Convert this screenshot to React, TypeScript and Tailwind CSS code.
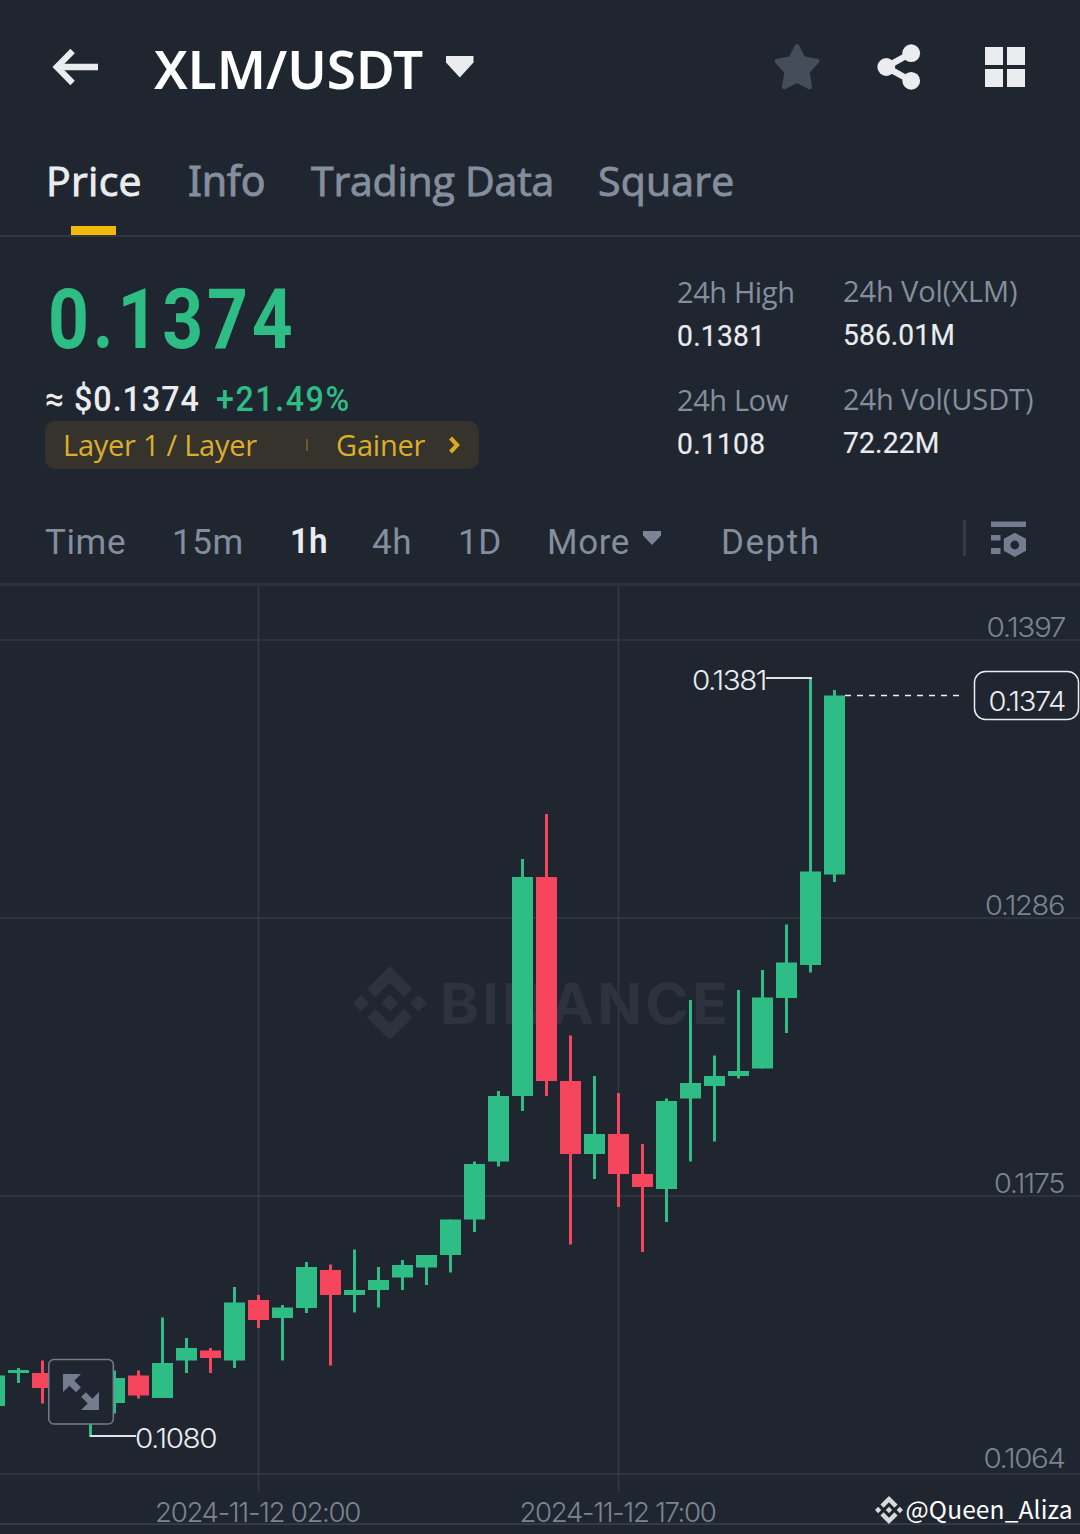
import React from 'react';

type Candle = [x: number, top: number, bottom: number, high: number, low: number, up: boolean];

const candles: Candle[] = [
  [834.5, 695.5, 874.5, 690, 882, true],
  [810.5, 871.5, 965, 678, 972.5, true],
  [786.5, 962.5, 998, 924.5, 1033, true],
  [762.5, 997.5, 1068.5, 970, 1068.5, true],
  [738.5, 1071, 1076, 990, 1078.5, true],
  [714.5, 1076, 1086, 1055.5, 1141.5, true],
  [690.5, 1083, 1098.5, 1000, 1161.5, true],
  [666.5, 1101, 1189, 1098.5, 1222, true],
  [642.5, 1174, 1187, 1144, 1252, false],
  [618.5, 1134, 1174, 1093, 1207, false],
  [594.5, 1134, 1154, 1076, 1179, true],
  [570.5, 1081, 1154, 1035.5, 1244.5, false],
  [546.5, 877, 1081, 814, 1096, false],
  [522.5, 877, 1096, 859, 1111, true],
  [498.5, 1096, 1161.5, 1091, 1166.5, true],
  [474.5, 1164, 1219.5, 1161.5, 1232, true],
  [450.5, 1219.5, 1255, 1219.5, 1272.5, true],
  [426.5, 1255, 1267.5, 1255, 1285, true],
  [402.5, 1265, 1277.5, 1260, 1290, true],
  [378.5, 1280, 1290, 1267, 1307.5, true],
  [354.5, 1290, 1295, 1249.5, 1312.5, true],
  [330.5, 1270, 1295, 1264.5, 1365.5, false],
  [306.5, 1267, 1308, 1262, 1313, true],
  [282.5, 1307.5, 1318, 1305, 1360.5, true],
  [258.5, 1300, 1320, 1295, 1328, false],
  [234.5, 1302.5, 1360.5, 1287, 1368, true],
  [210.5, 1350.5, 1358, 1348, 1373, false],
  [186.5, 1348, 1360.5, 1338, 1373, true],
  [162.5, 1363, 1398, 1317.5, 1398, true],
  [138.5, 1375.5, 1395.5, 1370.5, 1398.5, false],
  [114.5, 1378, 1403, 1370.5, 1413.5, true],
  [90.5, 1390, 1410, 1380, 1437, true],
  [42.5, 1373, 1388, 1360.5, 1403.5, false],
  [18.5, 1370, 1373, 1368, 1383, true],
  [-5.5, 1375.5, 1406, 1370, 1410, true],
];

const LOGO =
  'M16.624 13.9202l2.7175 2.7154-7.353 7.353-7.353-7.352 2.7175-2.7164 4.6355 4.6595 4.6356-4.6595zm4.6366-4.6366L24 12l-2.7154 2.7164L18.5682 12l2.6924-2.7164zm-9.272.001l2.7163 2.6914-2.7164 2.7174v-.001L9.2721 12l2.7164-2.7154zm-9.2722-.001L5.4088 12l-2.6914 2.6924L0 12l2.7164-2.7164zM11.9885.0115l7.353 7.329-2.7174 2.7154-4.6356-4.6356-4.6355 4.6595-2.7174-2.7154 7.353-7.353z';

function Header() {
  return (
    <header className="flex h-[134px] items-center">
      <svg className="ml-[52px] h-[38px] w-[47px]" viewBox="52 48.2 47 38" fill="none" stroke="#eaecef">
        <path d="M98 67.2H58" strokeWidth="6.6" />
        <path d="M72.6 51.2L56.8 67.2L72.6 83.2" strokeWidth="6.2" />
      </svg>
      <h1 className="mt-[3px] ml-[55px] w-[292px] font-['Noto_Sans',sans-serif] text-[53px] leading-[70px] font-semibold text-white">
        XLM/USDT
      </h1>
      <svg className="h-[22px] w-[28px]" viewBox="0 0 28 22" fill="#eaecef">
        <path d="M0 0H27.5V6.5L13.8 21.5L0 6.5Z" />
      </svg>
      <svg className="ml-[299px] h-[48px] w-[48px]" viewBox="773 43 48 48">
        <path
          d="M797 46.5L803 58.8L816.8 61.2L807 71.8L809.6 86.8L797 80.2L784.4 86.8L787 71.8L777.2 61.2L791 58.8Z"
          fill="#454d5b"
          stroke="#454d5b"
          strokeWidth="5"
          strokeLinejoin="round"
        />
      </svg>
      <svg className="ml-[55px] h-[48px] w-[46px]" viewBox="876 43 46 48" fill="#eaecef">
        <path d="M911 53.2L886 67L911 80.8" fill="none" stroke="#eaecef" strokeWidth="6.4" />
        <circle cx="911.2" cy="53.2" r="8.9" />
        <circle cx="886.3" cy="67" r="8.9" />
        <circle cx="911.2" cy="80.8" r="8.9" />
      </svg>
      <div className="ml-[63px] grid grid-cols-2 gap-[4px]">
        <i className="size-[18px] bg-[#eaecef]" />
        <i className="size-[18px] bg-[#eaecef]" />
        <i className="size-[18px] bg-[#eaecef]" />
        <i className="size-[18px] bg-[#eaecef]" />
      </div>
    </header>
  );
}

function Tabs() {
  return (
    <nav className="h-[103px] border-b-2 border-[#303741]">
      <div className="flex h-[92px] items-center pl-[46px] font-['Open_Sans',sans-serif] text-[41px] leading-[60px] text-[#848e9c] [-webkit-text-stroke:0.9px]">
        <span className="w-[142px] tracking-[0.3px] text-[#eaecef]">Price</span>
        <span className="w-[123px] font-['Noto_Sans',sans-serif] tracking-[-0.2px]">Info</span>
        <span className="w-[287px] tracking-[-0.2px] whitespace-nowrap">Trading Data</span>
        <span className="tracking-[0.2px]">Square</span>
      </div>
      <div className="ml-[71px] h-[9px] w-[45px] bg-[#f0b90b]" />
    </nav>
  );
}

function Stat({ label, value, labelClass, valueClass }: { label: string; value: string; labelClass: string; valueClass: string }) {
  return (
    <div className="whitespace-nowrap">
      <div className={`h-[43px] font-['Open_Sans',sans-serif] text-[29px] leading-[43px] text-[#848e9c] ${labelClass}`}>{label}</div>
      <div className={`h-[43px] origin-left scale-x-[0.94] font-['Roboto',sans-serif] text-[30px] leading-[45px] text-[#eaecef] [-webkit-text-stroke:0.2px] ${valueClass}`}>
        {value}
      </div>
    </div>
  );
}

function Summary() {
  return (
    <section className="flex h-[263px]">
      <div className="ml-[45px] w-[632px] pt-[39px]">
        <div className="ml-[3px] h-[88px] origin-left scale-x-[0.86] font-['Roboto',sans-serif] text-[83px] leading-[88px] font-bold tracking-[4.5px] text-[#2ebd85]">
          0.1374
        </div>
        <div className="mt-[14px] flex h-[43px] font-['Roboto',sans-serif] text-[35px] leading-[44px] font-medium whitespace-nowrap">
          <span className="w-[29px] origin-left scale-x-[0.95] text-[#eaecef]">≈</span>
          <span className="w-[142px] origin-left scale-x-[0.92] tracking-[1.1px] text-[#eaecef]">$0.1374</span>
          <span className="origin-left scale-x-[0.92] tracking-[1.7px] text-[#2ebd85]">+21.49%</span>
        </div>
        <div className="flex h-[48px] w-[434px] items-center rounded-[10px] bg-[#35332b] font-['Open_Sans',sans-serif] text-[29px] leading-[46px] whitespace-nowrap text-[#dcae2c]">
          <span className="ml-[18px] w-[243px] tracking-[-0.25px]">Layer 1 / Layer</span>
          <span className="h-[12px] w-[2px] bg-[#6b5a27]" />
          <span className="ml-[28px] w-[112px] tracking-[-0.2px]">Gainer</span>
          <svg className="h-[18px] w-[13px]" viewBox="0 0 13 18" fill="none" stroke="#dcaa1e" strokeWidth="4">
            <path d="M2.5 2L9.2 9L2.5 16" />
          </svg>
        </div>
      </div>
      <div className="flex w-[166px] flex-col gap-[22px] pt-[33px]">
        <Stat label="24h High" value="0.1381" labelClass="tracking-[-0.4px]" valueClass="tracking-[0.3px]" />
        <Stat label="24h Low" value="0.1108" labelClass="tracking-[-0.4px]" valueClass="tracking-[0.3px]" />
      </div>
      <div className="flex flex-col gap-[22px] pt-[32px]">
        <Stat label="24h Vol(XLM)" value="586.01M" labelClass="tracking-[-0.1px]" valueClass="tracking-[0.1px]" />
        <Stat label="24h Vol(USDT)" value="72.22M" labelClass="tracking-[-0.1px]" valueClass="tracking-[0.2px]" />
      </div>
    </section>
  );
}

function Intervals() {
  return (
    <div className="flex h-[86px] items-center border-b-[3px] border-[#2b323d] pt-[2px] pl-[45px] font-['Roboto',sans-serif] text-[35px] leading-[44px] tracking-[0.6px] text-[#848e9c]">
      <span className="w-[127px]">Time</span>
      <span className="w-[118px]">15m</span>
      <span className="mb-[2px] w-[82px] origin-left scale-x-[0.95] font-semibold tracking-[0px] text-[#eaecef]">1h</span>
      <span className="w-[86px]">4h</span>
      <span className="w-[89px]">1D</span>
      <span className="w-[96px]">More</span>
      <svg className="mb-[10px] h-[14px] w-[18px]" viewBox="0 0 18 14" fill="#7a8494">
        <path d="M0 0H18V4.6L9 14L0 4.6Z" />
      </svg>
      <span className="ml-[60px] w-[242px] tracking-[1.5px]">Depth</span>
      <span className="mb-[9px] h-[36px] w-[3px] bg-[#343b46]" />
      <svg className="mb-[8px] ml-[25px] h-[36px] w-[36px]" viewBox="0 0 36 36" fill="#747d8f">
        <rect x="0" y="0.5" width="35" height="5.5" />
        <rect x="0" y="14" width="9.5" height="5.5" />
        <rect x="0" y="27" width="9.5" height="6" />
        <path fillRule="evenodd" d="M23.8 11.8L35 17.8V29.8L23.8 36L12.8 29.8V17.8ZM23.8 19.6A4.4 4.4 0 1 0 23.8 28.4A4.4 4.4 0 1 0 23.8 19.6Z" />
      </svg>
    </div>
  );
}

function Label({ x, y, w, color, children }: { x: number; y: number; w: number; color: string; children: string }) {
  return (
    <text
      x={x}
      y={y}
      textLength={w}
      lengthAdjust="spacingAndGlyphs"
      fill={color}
      className="font-['Inter',sans-serif] text-[26.5px] font-light tracking-[-1.3px]"
    >
      {children}
    </text>
  );
}

function Chart() {
  return (
    <svg className="block h-[948px] w-[1080px]" viewBox="0 586 1080 948">
      <g stroke="#2d343f" strokeWidth="2">
        {[640, 918, 1196, 1474].map((y) => (
          <path key={y} d={`M0 ${y}H1080`} />
        ))}
        <path d="M0 1524H1080" stroke="#343b46" />
      </g>
      <path d="M258.5 586V1491.5M618.5 586V1491.5" stroke="#333a46" strokeWidth="1.5" />

      <g fill="#2d323d">
        <path d={LOGO} transform="translate(352.7 966) scale(3.09)" />
        <text
          x="440"
          y="1023.5"
          textLength="291"
          lengthAdjust="spacingAndGlyphs"
          className="font-['Inter',sans-serif] text-[56px] font-bold tracking-[3px]"
        >
          BINANCE
        </text>
      </g>

      {candles.map(([x, top, bottom, high, low, up]) => (
        <g key={x} fill={up ? '#2ebd85' : '#f6465d'}>
          <rect x={x - 1.5} y={high} width="3" height={low - high} />
          <rect x={x - 10.5} y={top} width="21" height={bottom - top} />
        </g>
      ))}

      <Label x={986.5} y={637} w={78.5} color="#7b8492">0.1397</Label>
      <Label x={985} y={915} w={79} color="#7b8492">0.1286</Label>
      <Label x={994} y={1193} w={70} color="#7b8492">0.1175</Label>
      <Label x={983.5} y={1468} w={81} color="#7b8492">0.1064</Label>
      <Label x={155} y={1522} w={205} color="#7b8492">2024-11-12 02:00</Label>
      <Label x={519.5} y={1522} w={196} color="#7b8492">2024-11-12 17:00</Label>

      <path d="M766 678H812" stroke="#dfe2e6" strokeWidth="1.8" />
      <Label x={692} y={690} w={74} color="#eaecef">0.1381</Label>
      <path d="M845 695.5H960" stroke="#eaecef" strokeWidth="1.5" strokeDasharray="6 6" />
      <rect x="974.5" y="671.5" width="104" height="48" rx="11" fill="#1f2630" stroke="#eaecef" strokeWidth="1.5" />
      <Label x={988.5} y={711} w={76.5} color="#eaecef">0.1374</Label>
      <path d="M90 1436H136" stroke="#dfe2e6" strokeWidth="1.8" />
      <Label x={135} y={1448} w={81} color="#eaecef">0.1080</Label>

      <rect x="48.8" y="1359.5" width="64.5" height="64.5" rx="5" fill="#1f2630" stroke="#747c8a" strokeWidth="1.5" />
      <path
        d="M63 1374H81L74.3 1380.7L81 1387.3L76 1392.3L69.5 1385.7L63 1392ZM99 1392V1410H81L87.7 1403.5L81.2 1396.8L85.8 1392.2L92.3 1398.8Z"
        fill="#747d8f"
      />

      <path d={LOGO} transform="translate(875 1496) scale(1.167)" fill="#d9dadb" />
      <text
        x="905.5"
        y="1519"
        textLength="167"
        className="font-['Noto_Sans_CJK_SC',sans-serif] text-[24.5px] font-normal [-webkit-text-stroke:0.4px_white]"
        fill="#fff"
      >
        @Queen_Aliza
      </text>
    </svg>
  );
}

export default function App() {
  return (
    <main className="h-[1534px] w-[1080px] overflow-hidden bg-[#1f2630]">
      <Header />
      <Tabs />
      <Summary />
      <Intervals />
      <Chart />
    </main>
  );
}
